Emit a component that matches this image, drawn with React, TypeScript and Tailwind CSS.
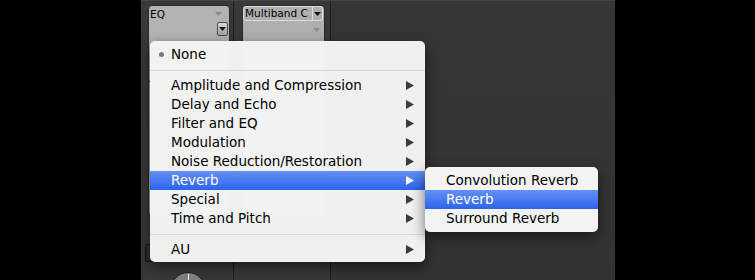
import React from 'react'

const mainItems = [
  'Amplitude and Compression',
  'Delay and Echo',
  'Filter and EQ',
  'Modulation',
  'Noise Reduction/Restoration',
  'Reverb',
  'Special',
  'Time and Pitch',
]

const subItems = ['Convolution Reverb', 'Reverb', 'Surround Reverb']

function Arrow({ active }: { active?: boolean }) {
  return (
    <svg width="8" height="9" viewBox="0 0 8 9" className="shrink-0">
      <path d="M0 0 L8 4.5 L0 9 Z" fill={active ? '#ffffff' : '#3c3c3c'} />
    </svg>
  )
}

function TinyDown({ color }: { color: string }) {
  return (
    <svg width="7" height="4" viewBox="0 0 7 4">
      <path d="M0 0 L7 0 L3.5 4 Z" fill={color} />
    </svg>
  )
}

function MenuRow({ label, active }: { label: string; active?: boolean }) {
  return (
    <div
      className={`flex h-[19px] items-center pl-[21px] pr-[11px] ${
        active ? 'bg-gradient-to-b from-[#6590f6] to-[#2c62ee] text-white' : 'text-black'
      }`}
    >
      <span className="flex-1 leading-none">{label}</span>
      <Arrow active={active} />
    </div>
  )
}

export default function App() {
  return (
    <div className="flex h-[280px] w-[755px] overflow-hidden bg-black font-['DejaVu_Sans',sans-serif]">
      <div className="w-[141px] shrink-0" />

      <div className="relative flex w-[474px] shrink-0 border-t border-[#464646] bg-[#363636]">
        {/* Strip 1 */}
        <div className="flex w-[92px] shrink-0 flex-col bg-[#383838] pl-[7px] pr-[3px] pt-[4px]">
          <div className="relative h-[211px] shrink-0 rounded-[4px] border border-[#2a2a2a] bg-gradient-to-b from-[#b4b4b4] to-[#a6a6a6]">
            <div className="flex items-start justify-between pl-[1px] pr-[7px] pt-[2px]">
              <span className="text-[10.5px] leading-[12px] text-black">EQ</span>
              <div className="pt-[4px]">
                <TinyDown color="#8c8c8c" />
              </div>
            </div>
            <div className="absolute right-[1px] top-[16px] flex h-[14px] w-[11px] items-center justify-center rounded-[2px] border border-[#4a4a4a] bg-gradient-to-b from-[#d8d8d8] to-[#a0a0a0]">
              <TinyDown color="#111111" />
            </div>
            <div className="absolute left-0 right-0 top-[75px] h-px bg-[#3a3a3a]" />
          </div>
          <div className="-ml-[3px] mt-[28px] h-[18px] w-[60px] shrink-0 rounded-[2px] border border-[#141414] bg-[#2e2e2e]" />
          <div className="ml-[23px] mt-[10px] flex h-[34px] w-[34px] shrink-0 justify-center rounded-full border border-[#222] bg-gradient-to-b from-[#8a8a8a] to-[#5a5a5a]">
            <div className="mt-[1px] h-[7px] w-px bg-white" />
          </div>
        </div>
        <div className="w-px bg-[#1c1c1c]" />

        {/* Strip 2 */}
        <div className="flex w-[96px] shrink-0 flex-col bg-[#383838] pl-[8px] pr-[5px] pt-[4px]">
          <div className="relative h-[211px] shrink-0 rounded-[4px] border border-[#2a2a2a] bg-gradient-to-b from-[#b0b0b0] to-[#a6a6a6]">
            <div className="flex h-[15px]">
              <div className="flex w-[70px] items-center rounded-l-[3px] border border-[#dcdcdc] pl-[1px]">
                <span className="whitespace-nowrap text-[10.5px] leading-none text-black">Multiband C</span>
              </div>
              <div className="flex w-[10px] items-center justify-center rounded-r-[3px] border border-l-0 border-[#dcdcdc]">
                <TinyDown color="#111111" />
              </div>
            </div>
            <div className="flex justify-end pr-[4px] pt-[7px]">
              <TinyDown color="#8c8c8c" />
            </div>
          </div>
        </div>
        <div className="w-px bg-[#1c1c1c]" />

        <div className="flex-1 bg-gradient-to-b from-[#363636] to-[#333333]" />

        {/* Main popup menu */}
        <div className="absolute left-[9px] top-[40px] w-[275px] rounded-[5px] bg-[#f3f3f3]/[0.99] pb-[3px] pt-[4px] text-[13.5px] shadow-[0_5px_14px_rgba(0,0,0,0.55)]">
          <div className="flex h-[19px] items-center pl-[9px] text-black">
            <span className="h-[5px] w-[5px] rounded-full bg-[#7a7a7a]" />
            <span className="ml-[7px] leading-none">None</span>
          </div>
          <div className="flex h-[12px] items-center">
            <div className="h-px w-full bg-[#d9d9d9]" />
          </div>
          {mainItems.map((item) => (
            <MenuRow key={item} label={item} active={item === 'Reverb'} />
          ))}
          <div className="flex h-[12px] items-center">
            <div className="h-px w-full bg-[#d9d9d9]" />
          </div>
          <MenuRow label="AU" />
        </div>

        {/* Reverb submenu */}
        <div className="absolute left-[284px] top-[166px] w-[173px] rounded-[5px] bg-[#f3f3f3] py-[4px] text-[13.5px] shadow-[0_5px_14px_rgba(0,0,0,0.55)]">
          {subItems.map((item, i) => (
            <div
              key={item}
              className={`flex h-[19px] items-center pl-[21px] ${
                i === 1 ? 'bg-gradient-to-b from-[#6590f6] to-[#2c62ee] text-white' : 'text-black'
              }`}
            >
              <span className="leading-none">{item}</span>
            </div>
          ))}
        </div>
      </div>

      <div className="flex-1" />
    </div>
  )
}
